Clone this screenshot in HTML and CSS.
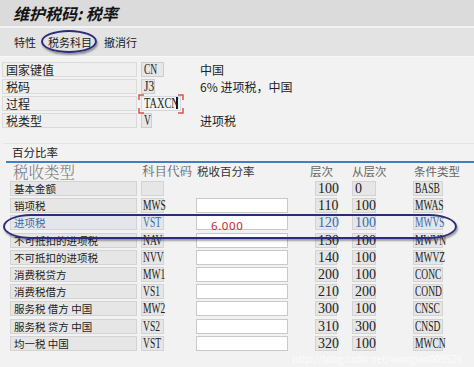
FILE: index.html
```html
<!DOCTYPE html>
<html lang="zh">
<head>
<meta charset="utf-8">
<title>维护税码: 税率</title>
<link rel="stylesheet" href="styles.css">
</head>
<body>
<div class="titlebar">维护税码: 税率</div>
<div class="toolbar">
  <span>特性</span>
  <span>税务科目</span>
  <span>撤消行</span>
</div>
<div class="content">
  <div class="form">
    <div class="flabel">国家键值</div><div class="fval"><span class="field w-cn"><span class="nar">CN</span></span></div><div class="fdesc">中国</div>
    <div class="flabel">税码</div><div class="fval"><span class="field w-j3"><span class="nar nar-j3">J3</span></span></div><div class="fdesc">6% 进项税，中国</div>
    <div class="flabel">过程</div><div class="fval"><span class="field field-edit w-tax"><span class="nar">TAXCN</span><span class="caret"></span></span></div><div class="fdesc"></div>
    <div class="flabel">税类型</div><div class="fval"><span class="field w-v"><span class="nar">V</span></span></div><div class="fdesc">进项税</div>
  </div>

  <div class="group">
    <div class="group-title">百分比率</div>
    <div class="row head">
      <div class="th th-type">税收类型</div>
      <div class="th th-code">科目代码</div>
      <div class="th th-pct">税收百分率</div>
      <div class="th th-lvl">层次</div>
      <div class="th th-from">从层次</div>
      <div class="th th-cond">条件类型</div>
    </div>
    <div class="rows">
      <div class="row">
        <div class="cell c-label">基本金额</div><div class="cell c-code"></div>
        <div class="cell c-lvl">100</div><div class="cell c-from">0</div><div class="cell c-cond"><span class="nar">BASB</span></div>
      </div>
      <div class="row">
        <div class="cell c-label">销项税</div><div class="cell c-code"><span class="nar">MWS</span></div><div class="cell c-pct"></div>
        <div class="cell c-lvl">110</div><div class="cell c-from">100</div><div class="cell c-cond"><span class="nar">MWAS</span></div>
      </div>
      <div class="row active">
        <div class="cell c-label">进项税</div><div class="cell c-code"><span class="nar">VST</span></div><div class="cell c-pct"><span class="rate">6.000</span></div>
        <div class="cell c-lvl">120</div><div class="cell c-from">100</div><div class="cell c-cond"><span class="nar">MWVS</span></div>
      </div>
      <div class="row">
        <div class="cell c-label">不可抵扣的进项税</div><div class="cell c-code"><span class="nar">NAV</span></div><div class="cell c-pct"></div>
        <div class="cell c-lvl">130</div><div class="cell c-from">100</div><div class="cell c-cond"><span class="nar">MWVN</span></div>
      </div>
      <div class="row">
        <div class="cell c-label">不可抵扣的进项税</div><div class="cell c-code"><span class="nar">NVV</span></div><div class="cell c-pct"></div>
        <div class="cell c-lvl">140</div><div class="cell c-from">100</div><div class="cell c-cond"><span class="nar">MWVZ</span></div>
      </div>
      <div class="row">
        <div class="cell c-label">消费税贷方</div><div class="cell c-code"><span class="nar">MW1</span></div><div class="cell c-pct"></div>
        <div class="cell c-lvl">200</div><div class="cell c-from">100</div><div class="cell c-cond"><span class="nar">CONC</span></div>
      </div>
      <div class="row">
        <div class="cell c-label">消费税借方</div><div class="cell c-code"><span class="nar">VS1</span></div><div class="cell c-pct"></div>
        <div class="cell c-lvl">210</div><div class="cell c-from">200</div><div class="cell c-cond"><span class="nar">COND</span></div>
      </div>
      <div class="row">
        <div class="cell c-label">服务税 借方 中国</div><div class="cell c-code"><span class="nar">MW2</span></div><div class="cell c-pct"></div>
        <div class="cell c-lvl">300</div><div class="cell c-from">100</div><div class="cell c-cond"><span class="nar">CNSC</span></div>
      </div>
      <div class="row">
        <div class="cell c-label">服务税 贷方 中国</div><div class="cell c-code"><span class="nar">VS2</span></div><div class="cell c-pct"></div>
        <div class="cell c-lvl">310</div><div class="cell c-from">300</div><div class="cell c-cond"><span class="nar">CNSD</span></div>
      </div>
      <div class="row">
        <div class="cell c-label">均一税 中国</div><div class="cell c-code"><span class="nar">VST</span></div><div class="cell c-pct"></div>
        <div class="cell c-lvl">320</div><div class="cell c-from">100</div><div class="cell c-cond"><span class="nar">MWCN</span></div>
      </div>
    </div>
  </div>
</div>

<svg class="corners" width="46" height="20" viewBox="0 0 46 20">
  <path d="M1 6 V1 H6 M40 1 H45 V6 M45 14 V19 H40 M6 19 H1 V14" fill="none" stroke="#d9534f" stroke-width="1.5"/>
</svg>
<div class="ring ring-tb"></div>
<div class="ring ring-row"></div>
<div class="watermark">http://blog.csdn.net/wangxin009526</div>
</body>
</html>
```

FILE: styles.css
```css
html, body {
  margin: 0;
  padding: 0;
}
body {
  width: 474px;
  height: 367px;
  overflow: hidden;
  background: #f2f2f2;
  font-family: "Noto Sans CJK SC", "Noto Sans", sans-serif;
  font-size: 12px;
  color: #222;
}

.titlebar {
  height: 26px;
  line-height: 27px;
  background: #dbdbdb;
  padding-left: 13px;
  font-size: 16px;
  font-weight: bold;
  font-style: italic;
  color: #141414;
  border-bottom: 2px solid #f3f3f3;
}

.toolbar {
  height: 28px;
  background: #e3e3e3;
  display: flex;
  align-items: center;
  gap: 12px;
  padding-left: 14px;
  font-size: 11px;
  color: #1a1a1a;
  border-bottom: 1px solid #f8f8f8;
}

.content {
  padding-top: 5px;
}

.form {
  display: grid;
  grid-template-columns: 135px 4px 59px 1fr;
  grid-auto-rows: 15px;
  row-gap: 2px;
  padding-left: 2px;
}
.flabel {
  grid-column: 1;
  box-sizing: border-box;
  background: #efefef;
  border: 1px solid #dadada;
  padding-left: 3px;
  line-height: 13px;
  font-size: 12px;
}
.fval {
  grid-column: 3;
}
.fdesc {
  grid-column: 4;
  line-height: 15px;
  font-size: 12px;
}
.field {
  display: inline-block;
  box-sizing: border-box;
  height: 15px;
  background: #e7e7e7;
  border: 1px solid #cdcdcd;
  padding-left: 2px;
  font-family: "Liberation Serif", serif;
  font-size: 14px;
  line-height: 13px;
  color: #222;
  white-space: nowrap;
  overflow: hidden;
  vertical-align: top;
}
.field-edit {
  background: #f4f4f4;
  border-color: #d8d8d8;
}
.w-cn { width: 23px; }
.w-j3 { width: 14px; }
.w-tax { width: 40px; }
.w-v { width: 11px; }
.nar.nar-j3 {
  transform: scaleX(0.82);
}
.caret {
  display: inline-block;
  width: 2px;
  height: 12px;
  background: #111;
  vertical-align: top;
  margin-left: -2px;
}
.w-tax .nar {
  transform: scaleX(0.74);
  width: 34px;
}

.nar {
  display: inline-block;
  transform: scaleX(0.68);
  transform-origin: 0 50%;
  white-space: nowrap;
}

.group {
  margin-top: 15px;
  margin-left: 4px;
  border-top: 1px solid #e4e4e4;
}
.group-title {
  height: 17px;
  line-height: 17px;
  margin-left: 2px;
  padding-left: 6px;
  font-size: 11.5px;
  border-bottom: 2px solid #3f7fc6;
}

.row {
  display: grid;
  grid-template-columns: 127px 4px 23px 32px 92px 27px 22px 15px 24px 37px 30px;
  height: 15px;
  padding-left: 6px;
}
.row.head {
  height: 16px;
  margin-bottom: 2px;
}
.th {
  white-space: nowrap;
  line-height: 16px;
  color: #666;
  font-size: 11.5px;
}
.th-type {
  grid-column: 1;
  padding-left: 3px;
  font-size: 15.5px;
  font-weight: 300;
  font-family: "Noto Serif CJK SC", "Noto Sans CJK SC", serif;
  color: #777;
}
.th-code {
  grid-column: 3;
  margin-left: 1px;
  font-size: 12.5px;
  font-family: "Noto Serif CJK SC", "Noto Sans CJK SC", serif;
  color: #666;
}
.th-pct {
  grid-column: 5;
  margin-left: 1px;
  color: #333;
}
.th-lvl {
  grid-column: 7;
  margin-left: -5px;
}
.th-from {
  grid-column: 9;
}
.th-cond {
  grid-column: 11;
  margin-left: 1px;
}

.rows {
  display: flex;
  flex-direction: column;
  gap: 2.2px;
}
.cell {
  box-sizing: border-box;
  height: 15px;
  background: #e6e6e6;
  border: 1px solid #d3d3d3;
  white-space: nowrap;
  overflow: visible;
}
.c-label {
  grid-column: 1;
  padding-left: 3px;
  line-height: 13px;
  font-size: 10.5px;
}
.c-code, .c-lvl, .c-from, .c-cond {
  font-family: "Liberation Serif", serif;
  font-size: 14px;
  line-height: 13px;
  color: #222;
}
.c-code { grid-column: 3; padding-left: 1px; }
.c-pct {
  grid-column: 5;
  background: #ffffff;
  border-color: #c9c9c9;
}
.c-lvl { grid-column: 7; padding-left: 2px; }
.c-from { grid-column: 9; padding-left: 2px; }
.c-cond { grid-column: 11; padding-left: 1px; }

.row.active .cell {
  color: #3b6cab;
  background: #e3e6ea;
}
.row.active .c-pct {
  background: #fff;
}
.rate {
  display: inline-block;
  padding-left: 14px;
  font-family: "Noto Sans", sans-serif;
  font-size: 11.5px;
  letter-spacing: 0.6px;
  line-height: 13px;
  color: #c8272c;
}

.corners {
  position: absolute;
  left: 138px;
  top: 94px;
}
.ring {
  position: absolute;
  box-sizing: border-box;
  border: 2px solid #2c2c7c;
  box-shadow: 1px 2px 2px rgba(0, 0, 0, 0.35);
}
.ring-tb {
  left: 41px;
  top: 30px;
  width: 56px;
  height: 23px;
  border-radius: 50%;
}
.ring-row {
  left: 3px;
  top: 214px;
  width: 454px;
  height: 25px;
  border-radius: 28px / 12.5px;
}
.watermark {
  position: absolute;
  left: 292px;
  top: 353px;
  font-size: 10px;
  line-height: 12px;
  color: rgba(255, 255, 255, 0.75);
  white-space: nowrap;
}
```
